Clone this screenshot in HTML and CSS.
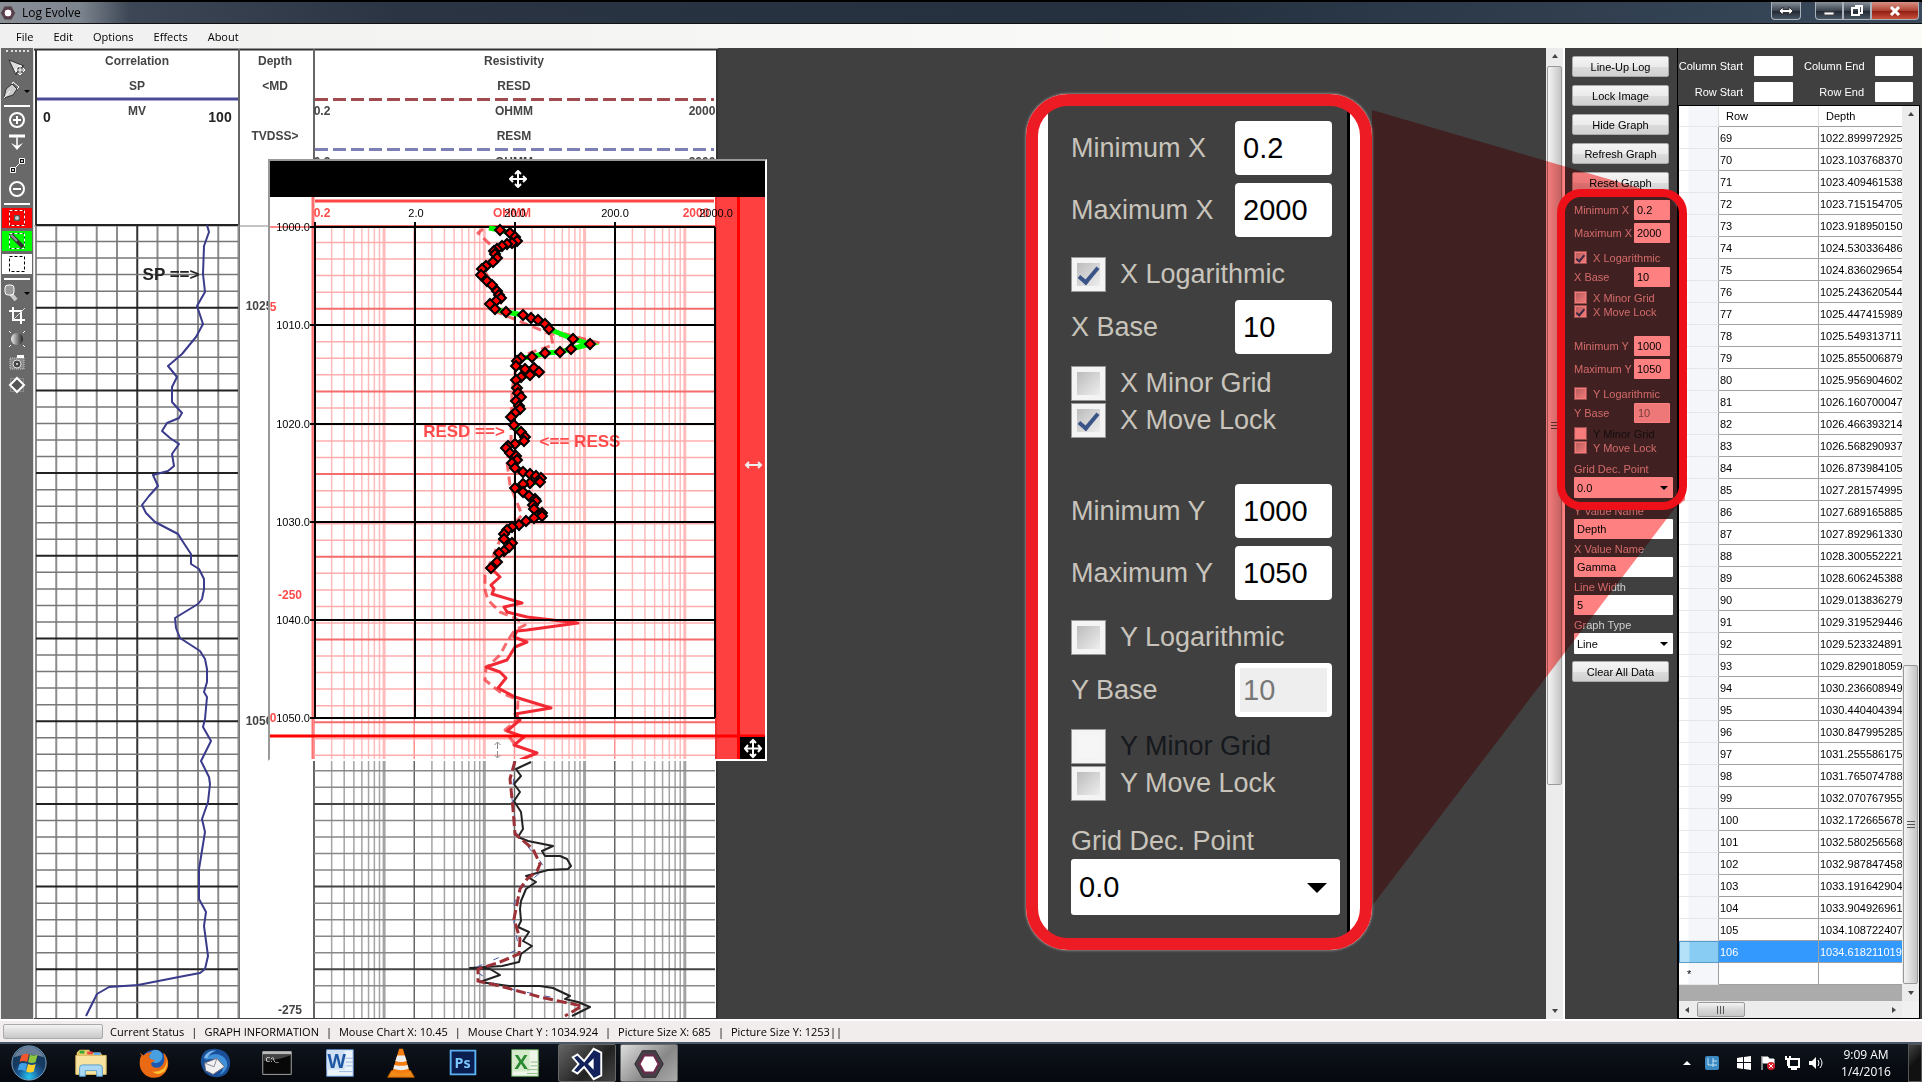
FILE: index.html
```html
<!DOCTYPE html>
<html lang="en">

<head>
    <meta charset="UTF-8">
    <meta name="viewport" content="width=device-width, initial-scale=1.0">
    <title>Log Evolve</title>
    <link rel="stylesheet" href="styles.css">
</head>

<body>
    <header class="title-bar">
        <svg class="app-icon" viewBox="0 0 16 16"><path d="M4.500 1h7l4 7-4 7h-7l-4-7z" fill="#4a4248" stroke="#8d8187"/><circle cx="8" cy="8" r="4" fill="#fff" stroke="#6b2b4a"/></svg>
        <h1>Log Evolve</h1>
        <div class="window-buttons">
            <button class="swap" aria-label="Move to other monitor"><svg width="16" height="10" viewBox="0 0 16 10"><path d="M1 5l4-4v2.500h6V1l4 4-4 4V6.500H5V9z" fill="#fff" stroke="#333"/></svg></button>
            <button class="minimize" aria-label="Minimize"><svg width="12" height="10" viewBox="0 0 12 10"><path d="M1 6h10v3H1z" fill="#fff" stroke="#444"/></svg></button>
            <button class="restore" aria-label="Restore"><svg width="12" height="11" viewBox="0 0 12 11"><path d="M4 1h7v7H9M1 3h7v7H1z" fill="none" stroke="#fff" stroke-width="2"/></svg></button>
            <button class="close" aria-label="Close"><svg width="12" height="10" viewBox="0 0 12 10"><path d="M2 1l8 8M10 1L2 9" stroke="#fff" stroke-width="3"/></svg></button>
        </div>
    </header>

    <nav class="menu-bar">
        <a href="#">File</a>
        <a href="#">Edit</a>
        <a href="#">Options</a>
        <a href="#">Effects</a>
        <a href="#">About</a>
    </nav>

    <main class="workspace">
        <div class="toolbar">
            <span class="grip"></span>
            <button aria-label="Move point"><svg viewBox="0 0 30 20"><path d="M7 2l15 6-6 2-2 7z" fill="#ddd" stroke="#333"/><path d="M18 7v10M13 12h10M16 9l2-2 2 2M16 15l2 2 2-2M15 10l-2 2 2 2M21 10l2 2-2 2" fill="none" stroke="#fff"/></svg></button>
            <button aria-label="Pen"><svg viewBox="0 0 30 20"><path d="M2 17l2-9 6-5 5 5-4 6z" fill="#ccc" stroke="#333"/><path d="M2 17l6-7M10 3l1-2 6 5-2 2" stroke="#fff" fill="none"/><path d="M22 9h6l-3 3z"/></svg></button>
            <hr>
            <button aria-label="Add point"><svg viewBox="0 0 30 20"><circle cx="15" cy="10" r="7" fill="none" stroke="#fff" stroke-width="2"/><path d="M11 10h8M15 6v8" stroke="#fff" stroke-width="2"/></svg></button>
            <button aria-label="Insert below"><svg viewBox="0 0 30 20"><path d="M7 3h16" stroke="#fff" stroke-width="3"/><path d="M15 4v9" stroke="#ddd" stroke-width="2"/><path d="M9 10l6 7 6-7-6 3z" fill="#fff"/></svg></button>
            <button aria-label="Connect points"><svg viewBox="0 0 30 20"><path d="M12 13l6-6" stroke="#fff"/><path d="M17.500 2.500h5v5h-5zM8.500 11.500h5v5h-5z" stroke="#fff" fill="#111"/><path d="M20 4v2M19 5h2M11 13v2M10 14h2" stroke="#fff"/></svg></button>
            <button aria-label="Remove point"><svg viewBox="0 0 30 20"><circle cx="15" cy="10" r="7" fill="none" stroke="#fff" stroke-width="2"/><path d="M11 10h8" stroke="#fff" stroke-width="2"/></svg></button>
            <hr>
            <button class="marker-color" aria-label="Marker color"><svg viewBox="0 0 30 20"><path d="M7.500 2.500h15v15h-15z" fill="none" stroke="#600"/><path d="M7.500 2.500h15v15h-15z" fill="none" stroke="#fff" stroke-dasharray="3 2"/><path d="M12 7h6v6h-6z" fill="#555"/><circle cx="15" cy="10" r="2" fill="#ccc"/></svg></button>
            <button class="line-color" aria-label="Line color"><svg viewBox="0 0 30 20"><path d="M7.500 2.500h15v15h-15z" fill="none" stroke="#042"/><path d="M7.500 2.500h15v15h-15z" fill="none" stroke="#fff" stroke-dasharray="3 2"/><path d="M9 4l12 12" stroke="#333" stroke-width="4"/><path d="M9 4l6 6" stroke="#999" stroke-width="2"/></svg></button>
            <button class="back-color" aria-label="Background color"><svg viewBox="0 0 30 20"><path d="M7.500 2.500h15v15h-15z" fill="none" stroke="#000" stroke-dasharray="3 2"/></svg></button>
            <hr>
            <button aria-label="Zoom"><svg viewBox="0 0 30 20"><path d="M9 11l5 6" stroke="#ccc" stroke-width="4"/><rect x="3" y="2" width="9" height="10" rx="3" fill="#999" stroke="#fff"/><path d="M22 9h6l-3 3z"/></svg></button>
            <button aria-label="Crop"><svg viewBox="0 0 30 20"><path d="M11 1v13h12M7 5h12v13" fill="none" stroke="#fff" stroke-width="2"/><path d="M11 14L23 2" stroke="#ddd"/></svg></button>
            <button aria-label="Contrast"><svg viewBox="0 0 30 20"><defs><linearGradient id="contrast"><stop offset="0" stop-color="#eee"/><stop offset="1" stop-color="#222"/></linearGradient></defs><circle cx="15" cy="10" r="6" fill="url(#contrast)"/><path d="M7 2l2 2M23 2l-2 2M7 18l2-2M23 18l-2-2" stroke="#fff"/></svg></button>
            <button aria-label="Snapshot"><svg viewBox="0 0 30 20"><path d="M8 6h14v11H8z" fill="#888" stroke="#ccc" stroke-dasharray="1 1"/><path d="M15 3h7v3h-7z" fill="#fff"/><circle cx="15" cy="12" r="4" fill="#444" stroke="#ddd"/><circle cx="15" cy="12" r="1" fill="#eee"/></svg></button>
            <button aria-label="Shape"><svg viewBox="0 0 30 20"><path d="M8.500 3.500h13v13h-13z" fill="none" stroke="#aaa" stroke-dasharray="1 1"/><path d="M15 3l7 7-7 7-7-7z" fill="#555" stroke="#fff" stroke-width="2"/></svg></button>
        </div>

        <section class="viewer">
            <svg class="log-image" width="684" height="970" viewBox="34 49 684 970">
                <defs><filter id="scan"><feGaussianBlur stdDeviation="0.7"/></filter></defs>
                <rect x="34" y="49" width="684" height="970" fill="#fff"/>
                <g filter="url(#scan)">
                    <path d="M34 50.500h684M36 50v969M717 50v969" stroke="#333" stroke-width="2" fill="none"/>
                    <path d="M239 50v969M314 50v969" stroke="#666" stroke-width="2"/>
                    <path d="M34 227h280" stroke="#888"/>
                    <g id="sp-grid"></g>
                    <g id="res-grid"></g>
                    <path d="M37 100h201" stroke="#4c4c98" stroke-width="3"/>
                    <path d="M315 100.500h399" stroke="#a04c50" stroke-width="3" stroke-dasharray="13 5"/>
                    <path d="M315 150.500h399" stroke="#7c80b4" stroke-width="3" stroke-dasharray="13 5"/>
                    <g class="log-text">
                        <text x="137" y="66">Correlation</text>
                        <text x="137" y="91">SP</text>
                        <text x="137" y="116">MV</text>
                        <text x="47" y="123" class="big">0</text>
                        <text x="220" y="123" class="big">100</text>
                        <text x="275" y="66">Depth</text>
                        <text x="275" y="91">&lt;MD</text>
                        <text x="275" y="141">TVDSS&gt;</text>
                        <text x="514" y="66">Resistivity</text>
                        <text x="514" y="91">RESD</text>
                        <text x="514" y="116">OHMM</text>
                        <text x="322" y="116">0.2</text>
                        <text x="702" y="116">2000</text>
                        <text x="514" y="141">RESM</text>
                        <text x="514" y="167">OHMM</text>
                        <text x="322" y="167">0.2</text>
                        <text x="702" y="167">2000</text>
                        <text x="171" y="281" class="curve-name">SP ==&gt;</text>
                        <text x="259" y="311">1025</text>
                        <text x="259" y="726">1050</text>
                        <text x="290" y="1015">-275</text>
                    </g>
                    <polyline class="log-curve" stroke="#3a3a8c" points="207,226 209,233 204,247 203,275 205,293 197,307 203,325 196,338 182,355 168,367 177,378 172,388 172,403 182,414 179,419 167,424 162,432 170,439 179,445 172,455 174,467 168,472 153,476 158,487 149,497 142,506 146,514 155,523 178,535 185,546 191,555 191,565 199,570 204,580 204,590 202,600 198,605 175,619 176,629 180,639 200,652 205,660 207,670 207,683 204,693 207,698 205,720 203,728 211,742 201,762 209,778 210,785 208,803 202,820 205,833 199,870 199,900 206,913 204,927 208,957 205,970 200,974 184,977 138,986 109,988 97,995 86,1017"/>
                    <polyline class="log-curve" stroke="#222" points="531,763 516,770 521,777 514,785 520,793 514,802 521,813 523,830 518,838 528,842 553,847 542,852 545,857 560,857 567,860 571,867 568,870 548,871 526,877 536,883 526,890 521,902 520,910 521,922 518,928 529,933 523,942 532,947 521,955 519,963 502,967 470,969 490,970 500,976 480,983 509,987 540,987 553,989 570,997 565,1000 578,1003 590,1008 572,1017"/>
                    <polyline fill="none" stroke="#4a5aa8" stroke-dasharray="6 12" points="515,762 512,800 517,835 540,862 545,870 520,890 514,905 514,925 519,950 472,970 500,988 560,1000"/>
                    <polyline fill="none" stroke="#9c3038" stroke-width="3" stroke-dasharray="10 4" points="515,762 510,780 513,810 515,835 533,850 540,865 537,872 527,880 520,890 517,905 514,920 520,940 519,955 500,963 478,970 478,982 500,987 540,998 582,1007 565,1017"/>
                </g>
            </svg>

            <div class="graph-window">
                <div class="graph-title">
                    <svg width="18" height="18" viewBox="0 0 18 18"><path d="M9 1v16M1 9h16M6 4l3-3 3 3M6 14l3 3 3-3M4 6L1 9l3 3M14 6l3 3-3 3" fill="none" stroke="#fff" stroke-width="2"/></svg>
                </div>
                <svg class="graph" width="495" height="562" viewBox="270 197 495 562">
                    <g filter="url(#scan)">
                        <path d="M313 197v562" stroke="#ff7070" stroke-width="3"/>
                        <path d="M315 201h399" stroke="#f44" stroke-width="3"/>
                        <path d="M270 227h445" stroke="#f88" stroke-width="2"/>
                        <g id="overlay-grid"></g>
                        <g class="log-text red">
                            <text x="322" y="217">0.2</text>
                            <text x="512" y="217">OHMM</text>
                            <text x="696" y="217">2000</text>
                            <text x="273" y="311">5</text>
                            <text x="273" y="722">0</text>
                            <text x="290" y="599">-250</text>
                            <text x="464" y="437" class="curve-name">RESD ==&gt;</text>
                            <text x="580" y="447" class="curve-name">&lt;== RESS</text>
                        </g>
                        <polyline class="red-curve" points="491,568 500,577 491,585 494,589 492,594 522,603 504,607 507,612 527,617 578,623 527,630 517,631 514,637 527,642 515,647 507,660 486,667 500,672 506,678 498,688 515,697 551,708 515,714 520,720 507,731 524,737 514,745 537,753 520,760"/>
                        <polyline class="red-curve dashed" points="483,229 478,233 495,249 484,270 502,300 497,312 548,333 600,343 550,330 553,345 518,357 512,390 511,440 507,462 510,485 522,515 500,540 485,575 485,590 488,600 500,612 515,618 525,625 515,630 508,640 500,655 486,668 485,680 500,692 518,700 517,720 505,730 515,745"/>
                    </g>
                    <path d="M715 197h50v562h-50z" fill="#ff4040"/>
                    <path d="M716 197v562" stroke="#d82020"/>
                    <path d="M738.500 197v562M270 736h495" stroke="#f00" stroke-width="3"/>
                    <path d="M740 737h25v22h-25z"/>
                    <path d="M315 222v497M415 222v497M515 222v497M615 222v497M715 227v491M310 227h405M310 325h405M310 424h405M310 522h405M310 620h405M310 718h405" stroke="#000" stroke-width="2"/>
                    <g class="axis-text">
                        <text x="416" y="217">2.0</text>
                        <text x="515" y="217">20.0</text>
                        <text x="615" y="217">200.0</text>
                        <text x="716" y="217">2000.0</text>
                        <text x="293" y="231">1000.0</text>
                        <text x="293" y="329">1010.0</text>
                        <text x="293" y="428">1020.0</text>
                        <text x="293" y="526">1030.0</text>
                        <text x="293" y="624">1040.0</text>
                        <text x="293" y="722">1050.0</text>
                    </g>
                    <polyline id="data-line" fill="none" stroke="#0f0" stroke-width="5"/>
                    <g id="data-points"></g>
                    <path d="M753 741v15M745 748.500h16M750 743l3-3 3 3M750 754l3 3 3-3M748 745l-3 3.500 3 3.500M758 745l3 3.500-3 3.500" fill="none" stroke="#fff" stroke-width="2"/>
                    <path d="M746 465h15M749 462l-3 3 3 3M758 462l3 3-3 3" fill="none" stroke="#eee" stroke-width="2"/>
                    <path d="M497.500 743v6M497.500 751v6M494.500 745l3-3 3 3M494.500 755l3 3 3-3" fill="none" stroke="#888"/>
                </svg>
            </div>
        </section>

        <div class="scrollbar vertical viewer-scroll"><i class="arrow up"></i><span class="thumb"><b></b></span><i class="arrow down"></i></div>

        <aside class="control-panel">
            <div class="actions">
                <button>Line-Up Log</button>
                <button>Lock Image</button>
                <button>Hide Graph</button>
                <button>Refresh Graph</button>
                <button>Reset Graph</button>
            </div>
            <form class="axis-form">
                <div class="field"><label for="min-x">Minimum X</label><input type="text" id="min-x" value="0.2"></div>
                <div class="field"><label for="max-x">Maximum X</label><input type="text" id="max-x" value="2000"></div>
                <div class="check mode"><input type="checkbox" id="x-log" checked><label for="x-log">X Logarithmic</label></div>
                <div class="field"><label for="x-base">X Base</label><input type="text" id="x-base" value="10"></div>
                <div class="check minor"><input type="checkbox" id="x-minor"><label for="x-minor">X Minor Grid</label></div>
                <div class="check"><input type="checkbox" id="x-lock" checked><label for="x-lock">X Move Lock</label></div>
                <div class="field y-start"><label for="min-y">Minimum Y</label><input type="text" id="min-y" value="1000"></div>
                <div class="field"><label for="max-y">Maximum Y</label><input type="text" id="max-y" value="1050"></div>
                <div class="check mode"><input type="checkbox" id="y-log"><label for="y-log">Y Logarithmic</label></div>
                <div class="field"><label for="y-base">Y Base</label><input type="text" id="y-base" value="10" disabled></div>
                <div class="check minor"><input type="checkbox" id="y-minor" disabled><label for="y-minor">Y Minor Grid</label></div>
                <div class="check"><input type="checkbox" id="y-lock"><label for="y-lock">Y Move Lock</label></div>
                <div class="stacked first"><label for="dec-point">Grid Dec. Point</label><span class="select"><select id="dec-point"><option>0.0</option></select></span></div>
            </form>
            <form class="value-form">
                <div class="stacked"><label for="y-name">Y Value Name</label><input type="text" id="y-name" value="Depth"></div>
                <div class="stacked"><label for="x-name">X Value Name</label><input type="text" id="x-name" value="Gamma"></div>
                <div class="stacked"><label for="line-width">Line Width</label><input type="text" id="line-width" value="5"></div>
                <div class="stacked"><label for="graph-type">Graph Type</label><span class="select"><select id="graph-type"><option>Line</option></select></span></div>
            </form>
            <div class="actions">
                <button>Clear All Data</button>
            </div>
        </aside>

        <section class="data-panel">
            <form class="range-form">
                <label for="col-start">Column Start</label><input type="text" id="col-start">
                <label for="col-end">Column End</label><input type="text" id="col-end">
                <label for="row-start">Row Start</label><input type="text" id="row-start">
                <label for="row-end">Row End</label><input type="text" id="row-end">
            </form>
            <div class="grid-view">
                <div class="table-clip">
                    <table>
                        <thead>
                            <tr><th class="row-head"></th><th class="row-col">Row</th><th>Depth</th></tr>
                        </thead>
                        <tbody id="depth-rows"></tbody>
                    </table>
                </div>
                <div class="scrollbar vertical table-scroll"><i class="arrow up"></i><span class="thumb"><b></b></span><i class="arrow down"></i></div>
                <div class="scrollbar horizontal"><i class="arrow left"></i><span class="thumb"><b></b></span><i class="arrow right"></i></div>
            </div>
        </section>

        <!-- Enlarged view of the axis settings -->
        <svg class="fan" width="313" height="800" viewBox="0 0 313 800"><path d="M0 0L298 87 313 110V390L303 398 0 796z" fill="#ff8080"/></svg>
        <div class="highlight"></div>
        <div class="callout">
            <form class="axis-form large">
                <div class="field"><label for="z-min-x">Minimum X</label><input type="text" id="z-min-x" value="0.2"></div>
                <div class="field"><label for="z-max-x">Maximum X</label><input type="text" id="z-max-x" value="2000"></div>
                <div class="check mode"><input type="checkbox" id="z-x-log" checked><label for="z-x-log">X Logarithmic</label></div>
                <div class="field"><label for="z-x-base">X Base</label><input type="text" id="z-x-base" value="10"></div>
                <div class="check minor"><input type="checkbox" id="z-x-minor"><label for="z-x-minor">X Minor Grid</label></div>
                <div class="check"><input type="checkbox" id="z-x-lock" checked><label for="z-x-lock">X Move Lock</label></div>
                <div class="field y-start"><label for="z-min-y">Minimum Y</label><input type="text" id="z-min-y" value="1000"></div>
                <div class="field"><label for="z-max-y">Maximum Y</label><input type="text" id="z-max-y" value="1050"></div>
                <div class="check mode"><input type="checkbox" id="z-y-log"><label for="z-y-log">Y Logarithmic</label></div>
                <div class="field"><label for="z-y-base">Y Base</label><input type="text" id="z-y-base" value="10" disabled></div>
                <div class="check minor"><input type="checkbox" id="z-y-minor" disabled><label for="z-y-minor">Y Minor Grid</label></div>
                <div class="check"><input type="checkbox" id="z-y-lock"><label for="z-y-lock">Y Move Lock</label></div>
                <div class="stacked first"><label for="z-dec-point">Grid Dec. Point</label><span class="select"><select id="z-dec-point"><option>0.0</option></select></span></div>
            </form>
        </div>
    </main>

    <footer class="status-bar">
        <span class="progress"></span>
        <span>Current Status</span><span>|</span>
        <span>GRAPH INFORMATION</span><span>|</span>
        <span>Mouse Chart X: 10.45</span><span>|</span>
        <span>Mouse Chart Y : 1034.924</span><span>|</span>
        <span>Picture Size X: 685</span><span>|</span>
        <span>Picture Size Y: 1253||</span>
    </footer>

    <div class="taskbar">
        <button class="start" aria-label="Start"><svg viewBox="0 0 40 40"><defs><radialGradient id="orb" cy="0.9"><stop offset="0" stop-color="#25c8f0"/><stop offset="0.6" stop-color="#1c5f9c"/><stop offset="1" stop-color="#16395f"/></radialGradient></defs><circle cx="20" cy="20" r="18" fill="url(#orb)" stroke="#7fa8c8"/><path d="M4 14a17 17 0 0132 0q-16-6-32 0z" fill="#fff" opacity=".35"/><path d="M12 12q4-3 8-1l-2 8q-4-2-8 0z" fill="#f0562c"/><path d="M21 11q4 2 8 0l-2 8q-4 2-8 0z" fill="#8cc63e"/><path d="M10 21q4-2 8 0l-2 8q-4-3-8-1z" fill="#3fa0e8"/><path d="M19 21q4 2 8 0l-2 8q-4 2-8 0z" fill="#ffcf2e"/></svg></button>
        <button aria-label="Explorer"><svg viewBox="0 0 40 40"><path d="M5 9l3-3h10l2 3h10l2 3v20H5z" fill="#e8c868"/><path d="M8 7h5v3H8z" fill="#3a3"/><path d="M16 8h6v3h-6z" fill="#e44"/><path d="M23 9h7v3h-7z" fill="#5af"/><path d="M4 12h32v20H4z" fill="#f8e4a0" stroke="#d8b860"/><path d="M8 34V25q0-3 3-3h18q3 0 3 3v9h-6v-6H14v6z" fill="#a8d8f4" stroke="#5a9cc8"/></svg></button>
        <button aria-label="Firefox"><svg viewBox="0 0 40 40"><circle cx="21" cy="19" r="13" fill="#1c58b0"/><circle cx="23" cy="13" r="7" fill="#49a0e0"/><path d="M6 9l4 3q4-4 9-3-4 3-3 6l6 2q-2 2-4 3 0 5 6 5 6 0 8-8l-1-8q5 5 5 12a15 15 0 01-30-1q0-6 2-8z" fill="#ea6a14"/><path d="M34 13q2 8-3 13-5 4-12 3 6 5 13 0 5-7 2-16z" fill="#fcc234"/></svg></button>
        <button aria-label="Thunderbird"><svg viewBox="0 0 40 40"><path d="M5 19Q5 5 20 5q15 1 16 15-1 15-15 15-14-1-16-16z" fill="#1a4f98"/><path d="M9 17q6-8 15-6 9 3 9 12-2 8-10 10 6-3 5-11-6-9-19-5z" fill="#3e90d8"/><path d="M9 20l13-5 8 9-12 8-8-4z" fill="#f0f0f0" stroke="#667"/><path d="M9 20l10 4 3-9" fill="none" stroke="#889"/><path d="M8 15q4-9 13-8-7 2-9 8z" fill="#7ab8ec"/></svg></button>
        <button aria-label="Command Prompt"><svg viewBox="0 0 40 40"><path d="M5 8h30v24H5z" fill="#080808" stroke="#aaa"/><path d="M5 8h30v3H5z" fill="#bbb"/><path d="M6 18q14-1 28-6v-1H6z" fill="#444"/><text x="8" y="19" font-size="8" fill="#fff">C:\_</text></svg></button>
        <button aria-label="Word"><svg viewBox="0 0 40 40"><path d="M7 6h28v28H7z" fill="#eaf2fb" stroke="#5a8ac8"/><path d="M27 15h8M27 19h8M27 23h8M20 29h14" stroke="#9bb8dc"/><path d="M7 7h19v20H7z" fill="#cfe0f4"/><text x="8" y="25" font-size="20" font-weight="bold" fill="#1f57a4">W</text></svg></button>
        <button aria-label="VLC"><svg viewBox="0 0 40 40"><path d="M10 28h20l4 7H6z" fill="#f08a18" stroke="#b85c00"/><path d="M18 5h4l7 24q-9 4-18 0z" fill="#f47c10"/><path d="M16 12h8l2 6q-6 2-12 0zM13 22q7 2 14 0l1 4q-8 3-16 0z" fill="#eee"/></svg></button>
        <button aria-label="Photoshop"><svg viewBox="0 0 40 40"><path d="M7 7h26v25H7z" fill="#0a1e50" stroke="#5ab0f0" stroke-width="2"/><text x="11" y="25" font-size="15" font-weight="bold" fill="#7cc8ff">Ps</text></svg></button>
        <button aria-label="Excel"><svg viewBox="0 0 40 40"><path d="M6 6h28v28H6z" fill="#eef6ea" stroke="#5a9c50"/><path d="M7 7h18v22H7z" fill="#d4eacb"/><path d="M26 19h9M26 23h9M22 27h12M22 31h12" stroke="#8cb884"/><text x="9" y="26" font-size="21" font-weight="bold" fill="#2a8a34">X</text></svg></button>
        <button class="running" aria-label="Visual Studio"><svg viewBox="0 0 40 40"><path d="M5 13l5-3 7 7L27 4l8 4v24l-8 4-10-13-7 7-5-3 6-7z" fill="#14225c" stroke="#fff" stroke-width="2"/><path d="M27 14v12l-6-6z" fill="#fff"/></svg></button>
        <button class="running active" aria-label="Log Evolve"><svg viewBox="0 0 40 40"><path d="M13 6h14l8 14-8 14H13L5 20z" fill="#444045" stroke="#2c282c"/><path d="M15 11h10l5 9-5 9H15l-5-9z" fill="#fff" stroke="#70284c" stroke-width="2"/></svg></button>
        <div class="tray">
            <svg width="8" height="6" viewBox="0 0 8 6"><path d="M0 5l4-4 4 4z" fill="#fff"/></svg>
            <svg class="tray-app" width="16" height="16" viewBox="0 0 16 16"><rect x="1" y="1" width="14" height="14" rx="2" fill="#3c88c0"/><path d="M4 3v7h9M9 3v9M9 6h4" fill="none" stroke="#bfe4fa"/></svg>
            <svg width="16" height="16" viewBox="0 0 16 16"><path d="M1 3l6-1v5H1zM8 2l7-1v6H8zM1 8h6v6l-6-1zM8 8h7v7l-7-1z" fill="#fff"/></svg>
            <svg width="16" height="16" viewBox="0 0 16 16"><path d="M2 1v14M3 2h5l1 2h5v6H9L8 8H3z" stroke="#fff" fill="#fff"/><circle cx="11" cy="11" r="4" fill="#d8202c"/><path d="M9 9l4 4M13 9l-4 4" stroke="#fff"/></svg>
            <svg width="16" height="16" viewBox="0 0 16 16"><path d="M5 4h10v8H5zM7 14h6M10 12v2M2 1v3h4V1M4 4v7" fill="none" stroke="#fff" stroke-width="2"/></svg>
            <svg width="16" height="16" viewBox="0 0 16 16"><path d="M1 6h3l4-4v12l-4-4H1z" fill="#fff"/><path d="M10 5q2 3 0 6M12 3q4 5 0 10" fill="none" stroke="#fff"/></svg>
        </div>
        <time>9:09 AM<br>1/4/2016</time>
        <button class="show-desktop" aria-label="Show desktop"></button>
    </div>

    <script>
        const depths = [
            "1022.899972925", "1023.103768370", "1023.409461538", "1023.715154705", "1023.918950150",
            "1024.530336486", "1024.836029654", "1025.243620544", "1025.447415989", "1025.549313711",
            "1025.855006879", "1025.956904602", "1026.160700047", "1026.466393214", "1026.568290937",
            "1026.873984105", "1027.281574995", "1027.689165885", "1027.892961330", "1028.300552221",
            "1028.606245388", "1029.013836279", "1029.319529446", "1029.523324891", "1029.829018059",
            "1030.236608949", "1030.440404394", "1030.847995285", "1031.255586175", "1031.765074788",
            "1032.070767955", "1032.172665678", "1032.580256568", "1032.987847458", "1033.191642904",
            "1033.904926961", "1034.108722407", "1034.618211019"
        ];
        const firstRow = 69;

        const points = [
            [500,230],[510,233],[515,237],[517,241],[512,243],[507,244],[502,246],[497,249],[494,251],[495,254],
            [497,258],[493,262],[486,266],[482,269],[481,275],[487,281],[492,285],[497,291],[499,295],[501,298],
            [496,301],[490,304],[495,309],[506,312],[523,315],[531,318],[538,320],[545,324],[549,329],[573,339],
            [590,344],[571,349],[560,352],[545,353],[532,357],[521,358],[517,361],[516,366],[525,369],[534,368],
            [539,372],[530,375],[521,377],[516,380],[517,388],[518,393],[521,397],[516,401],[519,406],[520,409],
            [515,413],[511,417],[514,425],[521,432],[525,437],[524,441],[515,444],[508,446],[506,448],[510,453],
            [516,456],[517,460],[512,463],[515,468],[523,472],[530,474],[536,476],[541,478],[540,482],[530,483],
            [523,484],[515,488],[523,492],[529,496],[535,499],[536,501],[533,505],[534,509],[542,513],[542,516],
            [534,518],[526,521],[519,525],[512,527],[507,530],[504,534],[504,539],[512,543],[509,547],[504,551],
            [499,553],[497,562],[491,568]
        ];

        function line(x1, y1, x2, y2, color, width) {
            return `<path d="M${x1} ${y1}L${x2} ${y2}" stroke="${color}" stroke-width="${width}"/>`;
        }

        // Depth lines, every fifth one stronger
        function depthLines(x1, x2, bottom, light, dark) {
            let out = "";
            for (let i = 0, y = 226; y < bottom; i++, y = 226 + i * 16.540) {
                const strong = i % 5 === 0;
                out += line(x1, y, x2, y, strong ? dark : light, strong ? 2 : 1.5);
            }
            return out;
        }

        // Four decades starting at 0.2
        function decadeLines(bottom, light, dark) {
            let out = "";
            for (let decade = 0; decade < 4; decade++) {
                for (let v = 2; v <= 10; v++) {
                    const x = 314 + 100.250 * (decade + Math.log10(v / 2));
                    out += line(x, 226, x, bottom, v === 2 ? dark : light, v === 10 ? 3 : 1.5);
                }
            }
            return out;
        }

        function spLines() {
            let out = "";
            for (let i = 0; i <= 10; i++) {
                const x = 36 + i * 20.250;
                out += line(x, 226, x, 1019, i === 5 ? "#333" : "#8c8c8c", 2);
            }
            return out;
        }

        function drawLog() {
            document.getElementById("sp-grid").innerHTML = spLines() + depthLines(36, 238, 1019, "#777", "#222");
            document.getElementById("res-grid").innerHTML = decadeLines(1019, "#a4a4a4", "#666") + depthLines(314, 715, 1019, "#888", "#444");
            document.getElementById("overlay-grid").innerHTML = decadeLines(759, "#ffbcbc", "#ff9090") + depthLines(314, 715, 759, "#ffacac", "#f46c6c");
        }

        function drawPoints() {
            document.getElementById("data-line").setAttribute("points", "489,228 " + points.join(" "));
            document.getElementById("data-points").innerHTML = points.map(([x, y]) =>
                `<path d="M${x} ${y - 5}l5 5-5 5-5-5z" fill="#f00" stroke="#000" stroke-width="2"/>`).join("");
        }

        function fillTable() {
            const last = depths.length - 1;
            document.getElementById("depth-rows").innerHTML = depths.map((depth, i) =>
                `<tr${i === last ? ' class="selected"' : ""}><th class="row-head"></th><td>${firstRow + i}</td><td>${depth}</td></tr>`
            ).join("") + '<tr><th class="row-head">*</th><td></td><td></td></tr>';
        }

        drawLog();
        drawPoints();
        fillTable();
    </script>
</body>
</html>
```
FILE: styles.css
```css
* {
    margin: 0;
    padding: 0;
    box-sizing: border-box;
}

body {
    display: flex;
    flex-direction: column;
    height: 100vh;
    overflow: hidden;
    background-color: #404040;
    font-family: "Liberation Sans", Arial, sans-serif;
    font-size: 11px;
    color: #000;
}

button,
input,
select {
    font: inherit;
    color: inherit;
    border: none;
}

/* Title bar */
.title-bar {
    display: flex;
    align-items: center;
    gap: 6px;
    height: 24px;
    flex: none;
    border-top: 2px solid #000;
    border-bottom: 1px solid #111;
    background: linear-gradient(90deg, #8a9098 0, #7c848e 80px, #3c4654 130px, #2a3442 400px, #24303e 60%, #3a4a5c);
}

.app-icon {
    width: 16px;
    height: 16px;
}

.title-bar h1 {
    flex: 1;
    font: 12px "Open Sans", sans-serif;
}

.window-buttons {
    display: flex;
    align-self: flex-start;
    margin-right: 3px;
}

.window-buttons button {
    display: flex;
    align-items: center;
    justify-content: center;
    width: 28px;
    height: 18px;
    border: 1px solid #aab2bc;
    border-top: none;
    background: linear-gradient(#8a929c, #3c4550 50%, #1e2630 51%, #4a5664);
}

.window-buttons .swap {
    width: 30px;
    margin-right: 14px;
    border-radius: 0 0 4px 4px;
}

.window-buttons .minimize {
    border-radius: 0 0 0 4px;
}

.window-buttons .close {
    width: 48px;
    border-radius: 0 0 4px 0;
    background: linear-gradient(#d89084, #b04434 50%, #8c1c10 51%, #c8503c);
}

.menu-bar {
    display: flex;
    align-items: center;
    gap: 20px;
    height: 24px;
    flex: none;
    padding-left: 16px;
    background: linear-gradient(90deg, #f0f0f0, #fbfbf8 70%);
    font: 11px "Open Sans", sans-serif;
}

.menu-bar a {
    color: #000;
    text-decoration: none;
}

/* Workspace */
.workspace {
    position: relative;
    display: flex;
    flex: 1;
    min-height: 0;
}

.toolbar {
    display: flex;
    flex-direction: column;
    width: 34px;
    padding-left: 1px;
    border-left: 1px solid #eee;
    border-right: 1px solid #ddd;
    background-color: #696969;
}

.toolbar .grip {
    height: 3px;
    margin: 2px 4px 5px;
    border-top: 2px dotted #ddd;
}

.toolbar button {
    width: 30px;
    height: 20px;
    margin-bottom: 3px;
    background: none;
}

.toolbar button svg {
    display: block;
    width: 30px;
    height: 20px;
}

.toolbar hr {
    width: 26px;
    height: 2px;
    margin: 1px 2px 3px;
    border: none;
    background-color: #fff;
}

.toolbar .marker-color {
    background-color: #f00;
}

.toolbar .line-color {
    background-color: #0f0;
}

.toolbar .back-color {
    background-color: #fff;
}

.viewer {
    position: relative;
    flex: 1;
    overflow: hidden;
}

.log-image,
.graph {
    display: block;
}

.log-text {
    font-size: 12px;
    font-weight: bold;
    fill: #444;
    text-anchor: middle;
}

.log-text .big {
    font-size: 14px;
    fill: #222;
}

.log-text .curve-name {
    font-size: 17px;
    fill: #222;
}

.log-text.red,
.log-text.red .curve-name {
    fill: #ff4c4c;
}

.log-curve {
    fill: none;
    stroke-width: 2;
    stroke-linejoin: round;
}

.graph-window {
    position: absolute;
    left: 234px;
    top: 111px;
    border: 2px solid #fff;
    border-top-color: #999;
    border-left-color: #999;
    background-color: #fff;
}

.graph-title {
    display: flex;
    align-items: center;
    justify-content: center;
    height: 36px;
    background-color: #000;
}

.red-curve {
    fill: none;
    stroke: #f22c34;
    stroke-width: 3;
    stroke-linejoin: round;
}

.red-curve.dashed {
    stroke-dasharray: 9 5;
    opacity: 0.7;
}

.axis-text {
    font-size: 11px;
    text-anchor: middle;
}

/* Scrollbars */
.scrollbar {
    display: flex;
    align-items: center;
    background-color: #ececec;
}

.scrollbar.vertical {
    flex-direction: column;
    width: 17px;
    padding: 6px 0;
}

.scrollbar.horizontal {
    height: 17px;
    padding: 0 6px;
}

.scrollbar .thumb {
    display: flex;
    align-items: center;
    justify-content: center;
    border: 1px solid #999;
    border-radius: 2px;
    background: linear-gradient(90deg, #f4f4f4, #d8d8d8 60%, #c4c4c4);
}

.vertical .thumb {
    width: 15px;
}

.horizontal .thumb {
    width: 48px;
    height: 15px;
    margin-left: 8px;
    background: linear-gradient(#f4f4f4, #d8d8d8 50%, #c8c8c8);
}

.thumb b {
    width: 8px;
    height: 8px;
    background: repeating-linear-gradient(#555 0 1px, transparent 1px 3px);
}

.horizontal .thumb b {
    background: repeating-linear-gradient(90deg, #555 0 1px, transparent 1px 3px);
}

.arrow {
    border: 3px solid transparent;
}

.arrow.up {
    border-top: none;
    border-bottom: 4px solid #444;
}

.arrow.down {
    margin-top: auto;
    border-bottom: none;
    border-top: 4px solid #444;
}

.arrow.left {
    border-left: none;
    border-right: 4px solid #444;
}

.arrow.right {
    margin-left: auto;
    border-right: none;
    border-left: 4px solid #444;
}

.viewer-scroll.vertical {
    width: 19px;
    border-right: 2px solid #fff;
}

.viewer-scroll .thumb {
    height: 75%;
    margin-top: 8px;
}

/* Control panel */
.control-panel {
    width: 113px;
    padding: 8px 4px 0 9px;
    border-right: 1px solid #000;
    color: #d0d0d0;
}

.actions {
    display: flex;
    flex-direction: column;
    gap: 8px;
    margin: 0 4px 7px -2px;
}

.actions button {
    height: 21px;
    border: 1px solid #aaa;
    border-radius: 2px;
    background: linear-gradient(#f4f4f4, #ebebeb 50%, #dcdcdc 51%, #d0d0d0);
    color: #000;
}

.axis-form,
.value-form {
    display: flex;
    flex-direction: column;
}

.field {
    display: flex;
    align-items: center;
    justify-content: space-between;
    margin: 0 3px 3px 0;
    white-space: nowrap;
}

input[type="text"],
.select select {
    height: 20px;
    padding: 0 3px;
    border-radius: 1px;
    background-color: #fff;
    color: #000;
}

.field input[type="text"] {
    width: 36px;
}

input[type="text"]:disabled {
    border: 1px solid #fff;
    background-color: #eee;
    color: #777;
}

.check {
    display: flex;
    align-items: center;
    gap: 6px;
    height: 13px;
    margin-bottom: 1px;
    white-space: nowrap;
}

.check.mode {
    margin: 5px 0 3px;
}

.check.minor {
    margin-top: 1px;
}

.check input {
    appearance: none;
    display: flex;
    justify-content: center;
    width: 13px;
    height: 13px;
    border: 2px solid #f4f4f4;
    outline: 1px solid #999;
    outline-offset: -1px;
    background: linear-gradient(135deg, #bbb, #eee);
}

.check input:disabled {
    background: #f6f6f6;
}

.check input:disabled + label {
    color: #15181c;
}

.check input:checked::after {
    content: "";
    width: 30%;
    height: 75%;
    border: solid #3a5488;
    border-width: 0 2px 2px 0;
    transform: rotate(40deg);
}

.y-start {
    margin-top: 17px;
}

.stacked {
    display: flex;
    flex-direction: column;
    margin-bottom: 2px;
}

.stacked label {
    line-height: 16px;
}

.stacked.first {
    margin: 6px 0 5px;
}

.select {
    position: relative;
    display: flex;
}

.select select {
    appearance: none;
    width: 100%;
    height: 21px;
}

.select::after {
    content: "";
    position: absolute;
    right: 5px;
    top: 9px;
    border: 4px solid transparent;
    border-top-color: #000;
    border-bottom: none;
}

.value-form {
    margin-bottom: 5px;
}

/* Data panel */
.data-panel {
    display: flex;
    flex-direction: column;
    width: 244px;
    padding-right: 2px;
}

.range-form {
    display: grid;
    grid-template-columns: 65px 39px minmax(0, 1fr) 38px;
    align-items: center;
    gap: 6px 11px;
    padding: 8px 7px 3px 0;
    color: #fff;
    text-align: right;
    white-space: nowrap;
}

.range-form input {
    width: 100%;
    height: 20px;
}

.grid-view {
    display: grid;
    grid-template-columns: minmax(0, 1fr) 17px;
    grid-template-rows: minmax(0, 1fr) 17px;
    flex: 1;
    min-height: 0;
    border: 1px solid #000;
    background-color: #f0f0f0;
}

.table-clip {
    overflow: hidden;
    background-color: #ababab;
}

table {
    width: 280px;
    table-layout: fixed;
    border-collapse: separate;
    border-spacing: 0;
    background-color: #fff;
    font-size: 11px;
}

th,
td {
    height: 22px;
    padding: 0 1px;
    border-right: 1px solid #a0a0a0;
    border-bottom: 1px solid #a0a0a0;
    text-align: left;
    font-weight: normal;
}

thead th {
    height: 21px;
    padding-left: 7px;
    border-right-color: #e0e0e0;
}

.row-head {
    width: 40px;
    border-bottom-color: #e4e6ea;
    background: linear-gradient(90deg, #fff 9px, #f4f6fa 10px);
    padding-left: 8px;
}

.row-col {
    width: 100px;
}

.selected td {
    background-color: #3399ff;
    color: #fff;
}

.selected .row-head {
    border: 1px solid #5a9cc8;
    background: linear-gradient(90deg, #b4e0f8 9px, #88ccf4 10px);
}

.table-scroll .thumb {
    height: 319px;
    margin-top: auto;
}

.table-scroll .arrow.down {
    margin-top: 7px;
}

/* Enlarged settings */
.fan {
    position: absolute;
    right: 237px;
    top: 62px;
    mix-blend-mode: multiply;
}

.highlight {
    position: absolute;
    right: 235px;
    top: 141px;
    width: 130px;
    height: 321px;
    border: 8px solid #ee1018;
    border-radius: 24px;
}

.callout {
    position: absolute;
    right: 550px;
    top: 46px;
    width: 346px;
    height: 856px;
    padding: 8px 22px;
    border-radius: 42px;
    background-color: #fff;
    box-shadow: 0 0 3px #bbb;
}

.callout::after {
    content: "";
    position: absolute;
    inset: 0;
    border: 12px solid #ed1c24;
    border-radius: 42px;
    pointer-events: none;
}

.axis-form.large {
    height: 100%;
    padding: 19px 7px 0 23px;
    border-right: 3px solid #000;
    background-color: #404040;
    color: #c8c4bc;
    font-size: 27px;
}

.large .field {
    margin: 0 8px 8px 0;
}

.large input[type="text"] {
    width: 97px;
    height: 54px;
    padding: 0 8px;
    border-radius: 4px;
    font-size: 29px;
}

.large input[type="text"]:disabled {
    border-width: 5px;
    padding: 0 3px;
}

.large .check {
    gap: 14px;
    height: 35px;
    margin-bottom: 2px;
}

.large .check.mode {
    margin: 12px 0 8px;
}

.large .check.minor {
    margin-top: 4px;
}

.large .check input {
    width: 35px;
    height: 35px;
    border-width: 6px;
}

.large .check input:checked::after {
    border-width: 0 4px 4px 0;
}

.large .y-start {
    margin-top: 44px;
}

.large .stacked.first {
    margin-top: 20px;
}

.large .stacked label {
    line-height: 36px;
}

.large .select select {
    height: 56px;
    padding: 0 8px;
    border-radius: 3px;
    font-size: 29px;
}

.large .select::after {
    right: 13px;
    top: 24px;
    border-width: 10px;
    border-bottom: none;
}

/* Status bar and taskbar */
.status-bar {
    display: flex;
    align-items: center;
    gap: 7px;
    height: 23px;
    flex: none;
    padding-left: 3px;
    border-top: 2px solid #fff;
    background-color: #f0edec;
    font: 11px "Open Sans", sans-serif;
}

.progress {
    width: 100px;
    height: 15px;
    border: 1px solid #aaa;
    border-radius: 2px;
    background: linear-gradient(#f4f4f4, #ddd 50%, #c8c8c8);
}

.taskbar {
    display: flex;
    align-items: center;
    height: 40px;
    flex: none;
    border-top: 2px solid #4c5868;
    background: linear-gradient(#10161e, #090d14 50%, #06090e);
    font-family: "Open Sans", sans-serif;
}

.taskbar button {
    width: 58px;
    height: 38px;
    margin-right: 4px;
    background: none;
}

.taskbar button svg {
    width: 38px;
    height: 38px;
    vertical-align: middle;
}

.taskbar .running {
    border: 1px solid #666;
    border-radius: 2px;
    background: linear-gradient(135deg, #666, #222 60%, #444);
}

.taskbar .active {
    background: linear-gradient(135deg, #ddd, #888 60%, #aaa);
}

.tray {
    display: flex;
    align-items: center;
    gap: 8px;
    margin-left: auto;
}

.tray .tray-app {
    margin: 0 8px 0 5px;
}

.taskbar time {
    width: 84px;
    line-height: 17px;
    font-size: 12px;
    color: #fff;
    text-align: center;
}

.taskbar .show-desktop {
    width: 14px;
    margin: 0;
    border: 1px solid #555;
    background: linear-gradient(135deg, #444, #111 50%);
}
```
